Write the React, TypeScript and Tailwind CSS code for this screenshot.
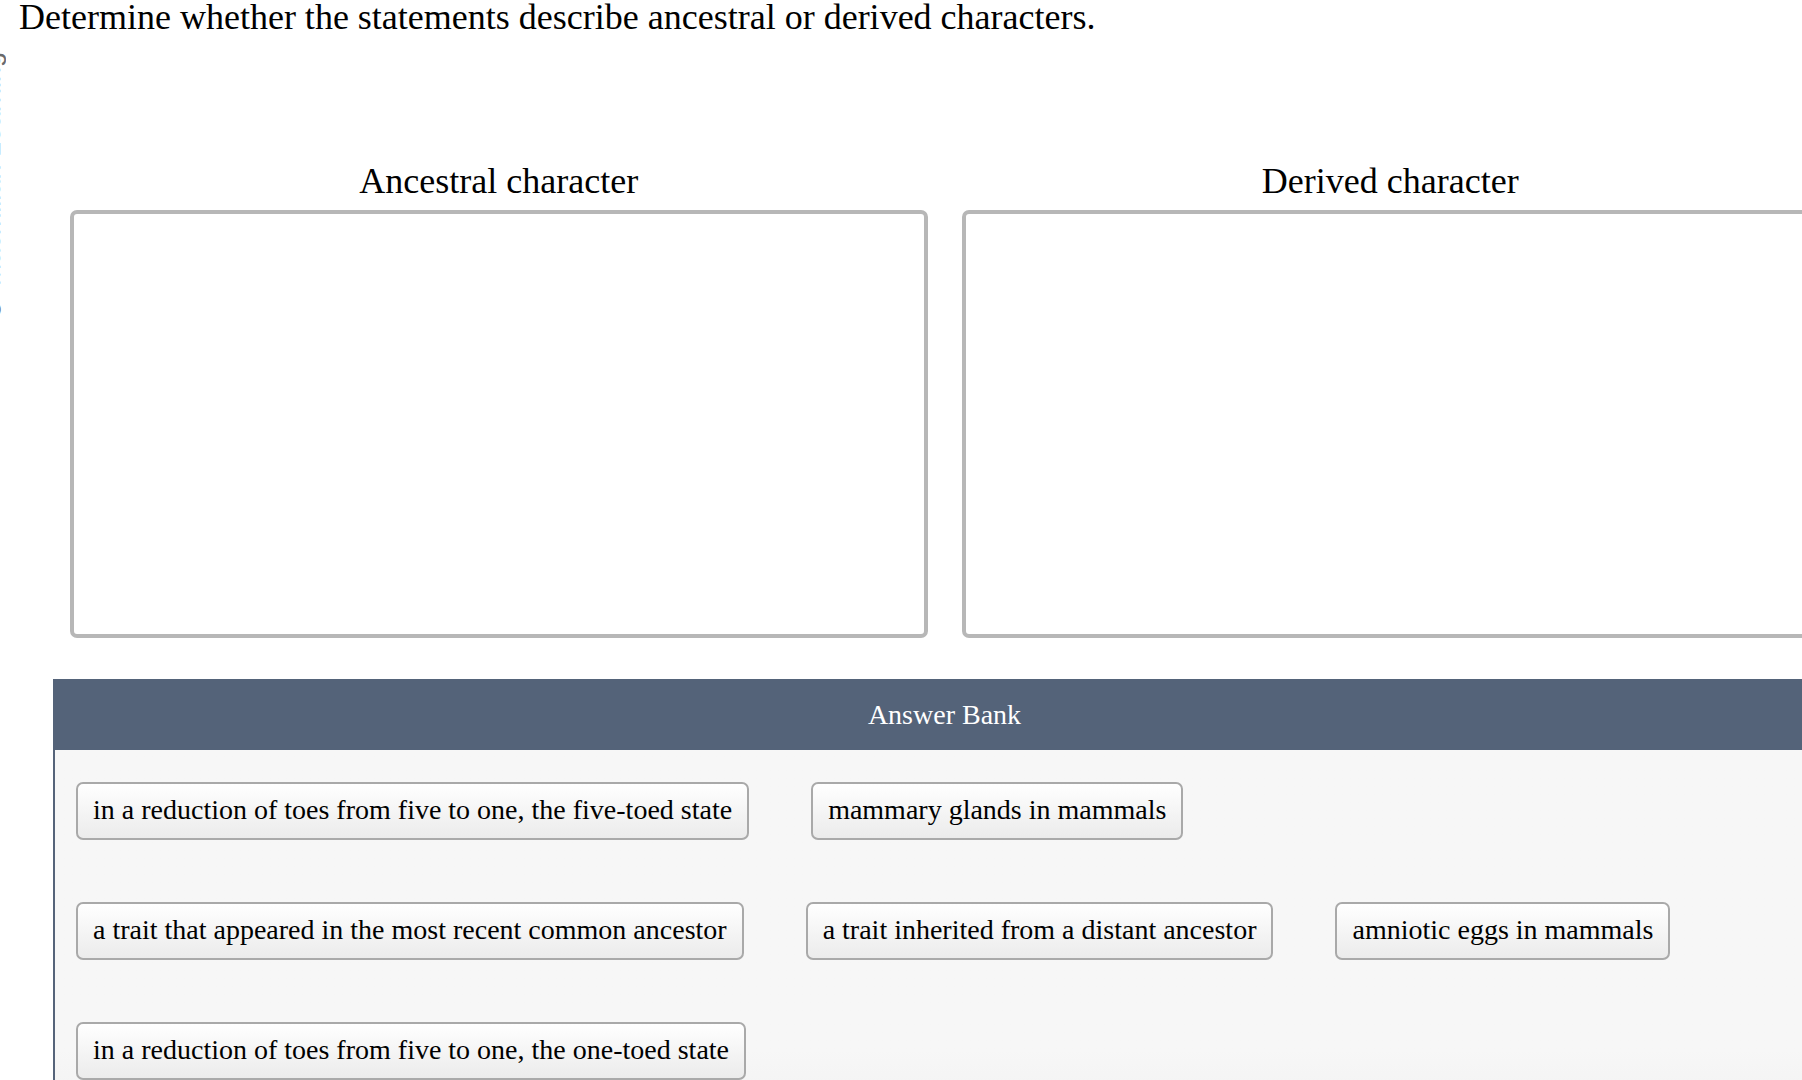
import React from 'react';

const bins = ['Ancestral character', 'Derived character'];

const answers = [
  'in a reduction of toes from five to one, the five-toed state',
  'mammary glands in mammals',
  'a trait that appeared in the most recent common ancestor',
  'a trait inherited from a distant ancestor',
  'amniotic eggs in mammals',
  'in a reduction of toes from five to one, the one-toed state',
];

const App: React.FC = () => {
  return (
    <div className="relative w-[1802px] h-[1080px] overflow-hidden bg-white text-black font-['Liberation_Serif','Times_New_Roman',serif]">
      {/* copyright strip, mostly off the left edge */}
      <div className="absolute left-[-24px] top-[52px] [writing-mode:vertical-rl] rotate-180 font-['Liberation_Sans',Arial,sans-serif] text-[27px] text-[#6a6a6a] leading-[30px] whitespace-nowrap">
        © Macmillan Learning
      </div>

      <h1 className="pl-[19px] mt-[-1px] text-[36px] leading-[36px] font-normal">
        Determine whether the statements describe ancestral or derived characters.
      </h1>

      <div className="ml-[53px] w-[1783px] mt-[126px]">
        <div className="grid grid-cols-2 gap-x-[34px] px-[17px]">
          {bins.map((b) => (
            <div key={b}>
              <h2 className="text-center text-[36px] leading-[40px] font-normal">{b}</h2>
              <div className="mt-[9px] h-[428px] rounded-[7px] border-4 border-[#b7b7b7] bg-white" />
            </div>
          ))}
        </div>

        <div className="mt-[41px]">
          <div className="h-[71px] bg-[#546379] flex items-center justify-center text-white text-[28px]">
            Answer Bank
          </div>
          <div className="h-[400px] border-l-2 border-[#56647a] bg-linear-to-b from-[#f7f7f7] from-75% to-[#efefef] pl-[21px] pt-[32px] flex flex-wrap content-start gap-x-[62px] gap-y-[62px]">
            {answers.map((a) => (
              <div
                key={a}
                className="h-[58px] flex items-center px-[15px] pb-[3px] rounded-[7px] border-2 border-[#a9a9a9] bg-linear-to-b from-white to-[#ebebeb] text-[28px] leading-[32px] whitespace-nowrap"
              >
                {a}
              </div>
            ))}
          </div>
        </div>
      </div>
    </div>
  );
};

export default App;
